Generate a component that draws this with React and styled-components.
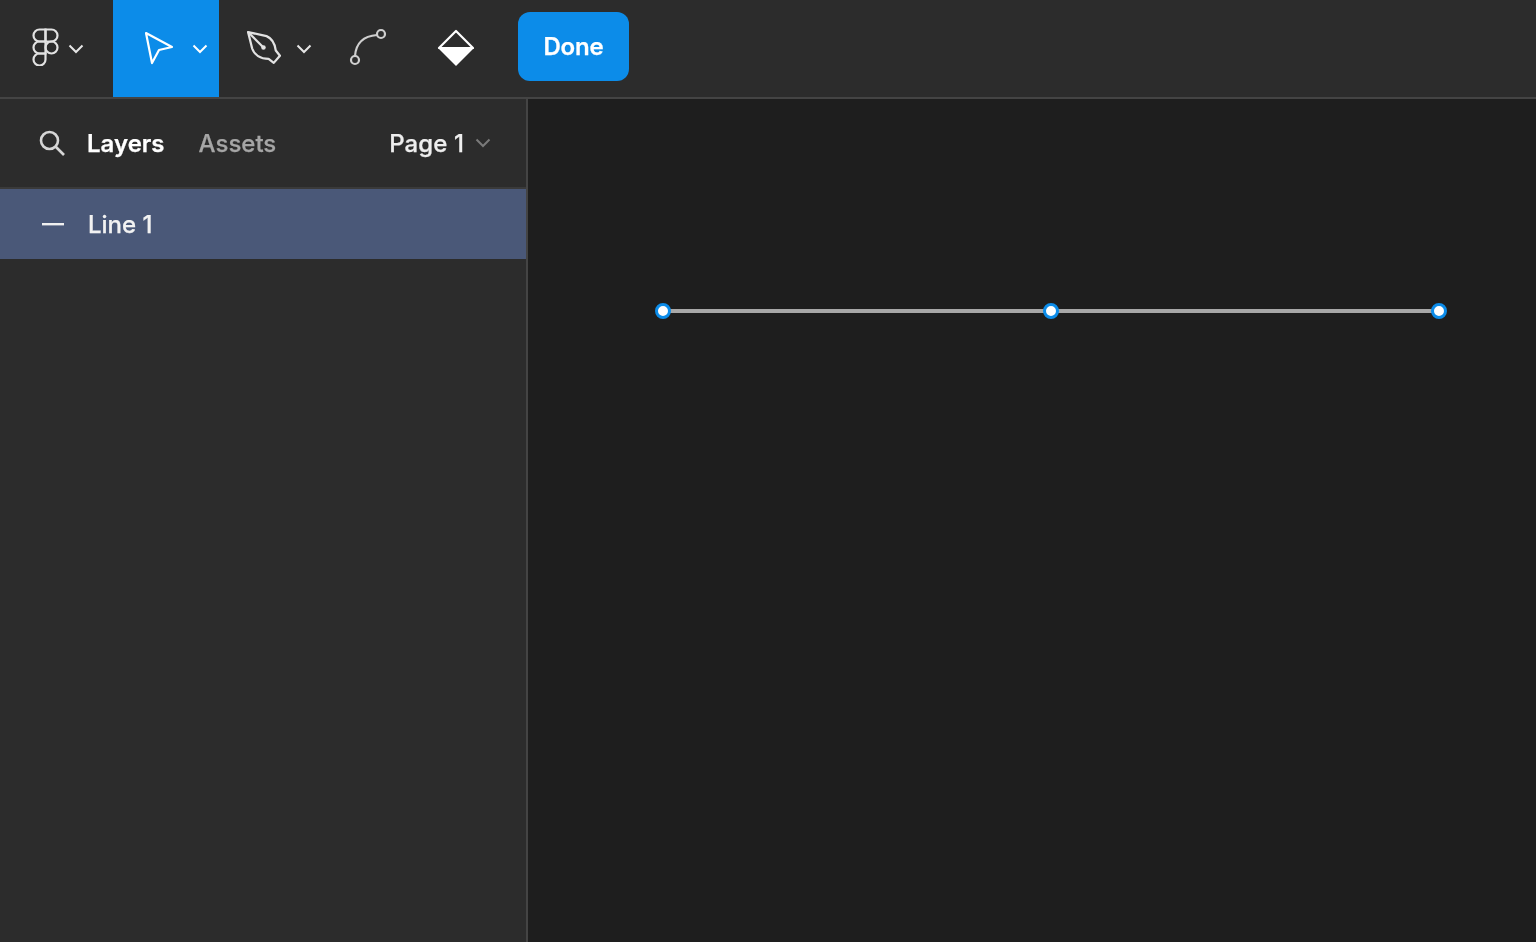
import React from "react";
import styled, { createGlobalStyle } from "styled-components";

const Global = createGlobalStyle`
  html, body { margin: 0; padding: 0; height: 100%; background: #1e1e1e; overflow: hidden; }
  #root { height: 100%; }
`;

const Page = styled.div`
  width: 1536px;
  height: 942px;
  display: flex;
  flex-direction: column;
  background: #1e1e1e;
  font-family: Inter, "Liberation Sans", sans-serif;
  color: #fff;
  filter: blur(0.45px);
  -webkit-text-stroke: 0.25px currentColor;
`;

const Toolbar = styled.header`
  height: 97px;
  flex: none;
  display: flex;
  align-items: stretch;
  background: #2c2c2c;
  border-bottom: 2px solid #444444;
`;

const ToolButton = styled.div`
  width: ${(p) => p.$w}px;
  flex: none;
  display: flex;
  align-items: center;
  background: ${(p) => (p.$active ? "#0c8ce9" : "transparent")};
  & > svg { flex: none; display: block; }
`;

const DoneButton = styled.button`
  align-self: flex-start;
  margin: 12px 0 0 48px;
  width: 111px;
  height: 69px;
  border: none;
  border-radius: 12px;
  background: #0c8ce9;
  color: #fff;
  font-family: inherit;
  font-size: 24px;
  font-weight: 600;
  letter-spacing: -0.2px;
  padding: 0;
`;

const Body = styled.div`
  flex: 1;
  display: flex;
  min-height: 0;
`;

const Sidebar = styled.aside`
  width: 526px;
  flex: none;
  background: #2c2c2c;
  border-right: 2px solid #444444;
  display: flex;
  flex-direction: column;
`;

const PanelHeader = styled.div`
  height: 88px;
  flex: none;
  display: flex;
  align-items: center;
  padding: 0 35px 0 39px;
  border-bottom: 2px solid #3a3a3a;
`;

const Tab = styled.span`
  font-size: 24px;
  font-weight: ${(p) => (p.$active ? 600 : 500)};
  color: ${(p) => (p.$active ? "#ffffff" : "#a6a6a6")};
  margin-left: ${(p) => p.$ml}px;
`;

const PageSelect = styled.div`
  margin-left: auto;
  display: flex;
  align-items: center;
  gap: 11px;
  font-size: 24px;
  font-weight: 500;
  letter-spacing: 0.1px;
  color: #eeeeee;
`;

const LayerRow = styled.div`
  height: 70px;
  flex: none;
  display: flex;
  align-items: center;
  padding-left: 42px;
  background: #4a5878;
  font-size: 24px;
  font-weight: 500;
  color: #f2f2f2;
  gap: 24px;
`;

const Canvas = styled.main`
  flex: 1;
  position: relative;
  background: #1e1e1e;
`;

const VectorLine = styled.div`
  position: absolute;
  left: 135px;
  top: 210px;
  width: 776px;
  height: 4px;
  background: #a8a8a8;
`;

const Handle = styled.span`
  position: absolute;
  top: 50%;
  left: ${(p) => p.$x}px;
  width: 10px;
  height: 10px;
  transform: translate(-50%, -50%);
  border-radius: 50%;
  background: #fff;
  border: 3px solid #0c8ce9;
`;

const Chevron = ({ color = "#e6e6e6", ml = 0 }) => (
  <svg width="16" height="10" viewBox="0 0 16 10" style={{ marginLeft: ml }} fill="none">
    <path d="M1.5 1.5 L8 8 L14.5 1.5" stroke={color} strokeWidth="2" />
  </svg>
);

export default function App() {
  return (
    <Page>
      <Global />
      <Toolbar>
        <ToolButton $w={113}>
          <svg width="27" height="38" viewBox="0 0 27 38" style={{ marginLeft: 32, marginTop: -4 }} fill="none" stroke="#e2e2e2" strokeWidth="2.2">
            <path d="M13.5 1.5 H7.5 a6 6 0 0 0 0 12 h6 Z" />
            <path d="M13.5 1.5 H19.5 a6 6 0 0 1 0 12 h-6 Z" />
            <path d="M13.5 13.5 H7.5 a6 6 0 0 0 0 12 h6 Z" />
            <circle cx="19.5" cy="19.5" r="6" />
            <path d="M7.5 25.5 h6 v6 a6 6 0 1 1 -6 -6 Z" />
          </svg>
          <Chevron ml={9} />
        </ToolButton>
        <ToolButton $w={106} $active>
          <svg width="30" height="34" viewBox="0 0 30 34" style={{ marginLeft: 31, marginTop: -2 }} fill="none" stroke="#ffffff" strokeWidth="2.2" strokeLinejoin="round">
            <path d="M2 2 L28 16 L15 19 L8 32 Z" />
          </svg>
          <Chevron ml={18} color="#ffffff" />
        </ToolButton>
        <ToolButton $w={102}>
          <svg width="37" height="37" viewBox="0 0 36 36" style={{ marginLeft: 27 }} fill="none" stroke="#e2e2e2" strokeWidth="2.2" strokeLinejoin="round">
            <path d="M2 2 L20 6 C25 8 28 13 29 20 L33 25 L27 32 L22 28 C14 28 8 24 6 18 Z" />
            <path d="M2 2 L16 16" />
            <circle cx="17" cy="17" r="2.2" fill="#e2e2e2" stroke="none" />
          </svg>
          <Chevron ml={13} />
        </ToolButton>
        <ToolButton $w={78}>
          <svg width="38" height="40" viewBox="0 0 38 40" style={{ marginLeft: 28, marginTop: -2 }} fill="none" stroke="#cfcfcf" strokeWidth="2.2">
            <path d="M6 28 C7 15 15 8 28 7" />
            <circle cx="6" cy="32" r="4" />
            <circle cx="32" cy="6" r="4" />
          </svg>
        </ToolButton>
        <ToolButton $w={71}>
          <svg width="38" height="38" viewBox="0 0 38 38" style={{ marginLeft: 38, marginTop: -2 }}>
            <path d="M19 2 L36 19 H2 Z" fill="none" stroke="#ffffff" strokeWidth="2.2" strokeLinejoin="round" />
            <path d="M1 19 H37 L19 37 Z" fill="#ffffff" />
          </svg>
        </ToolButton>
        <DoneButton>Done</DoneButton>
      </Toolbar>
      <Body>
        <Sidebar>
          <PanelHeader>
            <svg width="26" height="26" viewBox="0 0 26 26" fill="none" stroke="#d6d6d6" strokeWidth="2.6">
              <circle cx="10.5" cy="10.5" r="8.5" />
              <path d="M16.5 16.5 L25 25" />
            </svg>
            <Tab $active $ml={22}>Layers</Tab>
            <Tab $ml={34}>Assets</Tab>
            <PageSelect>
              Page 1
              <Chevron color="#7a7a7a" />
            </PageSelect>
          </PanelHeader>
          <LayerRow>
            <svg width="22" height="4" viewBox="0 0 22 4"><rect width="22" height="2.4" y="1" fill="#f0f0f0" /></svg>
            <span>Line 1</span>
          </LayerRow>
        </Sidebar>
        <Canvas>
          <VectorLine>
            <Handle $x={0} />
            <Handle $x={388} />
            <Handle $x={776} />
          </VectorLine>
        </Canvas>
      </Body>
    </Page>
  );
}
